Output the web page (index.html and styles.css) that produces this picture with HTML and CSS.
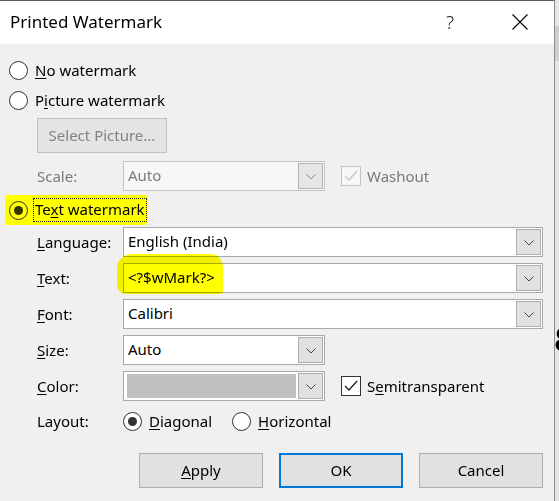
FILE: index.html
```html
<html>
<head>
	<meta charset="utf-8">
	<title>Printed Watermark</title>
	<link rel="stylesheet" href="styles.css">
</head>
<body>
	<div class="dialog">
		<div class="titlebar">
			<span class="title">Printed Watermark</span>
			<span class="tb-btn help">?</span>
			<span class="tb-btn close">
				<svg width="16" height="16" viewBox="0 0 16 16"><path d="M0.5 0.5 L15.5 15.5 M15.5 0.5 L0.5 15.5" stroke="#000" stroke-width="1.1" fill="none"/></svg>
			</span>
		</div>

		<div class="content">
			<div class="opt first"><span class="radio"></span><span><u>N</u>o watermark</span></div>
			<div class="opt"><span class="radio"></span><span>P<u>i</u>cture watermark</span></div>

			<div class="indent">
				<button class="btn select" disabled>Select Picture...</button>
				<div class="row scale">
					<span class="lbl off">Scale:</span>
					<div class="combo short off">
						<span class="val">Auto</span>
						<span class="drop"><svg width="10" height="6" viewBox="0 0 10 6"><polyline points="0.5,0.5 5,5 9.5,0.5" fill="none" stroke="#888" stroke-width="1"/></svg></span>
					</div>
					<span class="check off"><svg width="18" height="18" viewBox="0 0 18 18"><polyline points="3,9 7,13 15,4" fill="none" stroke="#c8c8c8" stroke-width="1.3"/></svg></span>
					<span class="off">Washout</span>
				</div>
			</div>

			<div class="hl">
				<span class="radio on"></span>
				<span class="focus">Te<u>x</u>t watermark</span>
			</div>

			<div class="indent fields">
				<div class="row">
					<span class="lbl"><u>L</u>anguage:</span>
					<div class="combo wide">
						<span class="val">English (India)</span>
						<span class="drop"><svg width="10" height="6" viewBox="0 0 10 6"><polyline points="0.5,0.5 5,5 9.5,0.5" fill="none" stroke="#444" stroke-width="1"/></svg></span>
					</div>
				</div>
				<div class="row">
					<span class="lbl"><u>T</u>ext:</span>
					<div class="combo wide">
						<span class="marker"></span>
						<span class="val">&lt;?$wMark?&gt;</span>
						<span class="drop"><svg width="10" height="6" viewBox="0 0 10 6"><polyline points="0.5,0.5 5,5 9.5,0.5" fill="none" stroke="#444" stroke-width="1"/></svg></span>
					</div>
				</div>
				<div class="row">
					<span class="lbl"><u>F</u>ont:</span>
					<div class="combo wide">
						<span class="val">Calibri</span>
						<span class="drop"><svg width="10" height="6" viewBox="0 0 10 6"><polyline points="0.5,0.5 5,5 9.5,0.5" fill="none" stroke="#444" stroke-width="1"/></svg></span>
					</div>
				</div>
				<div class="row">
					<span class="lbl"><u>S</u>ize:</span>
					<div class="combo short">
						<span class="val">Auto</span>
						<span class="drop"><svg width="10" height="6" viewBox="0 0 10 6"><polyline points="0.5,0.5 5,5 9.5,0.5" fill="none" stroke="#444" stroke-width="1"/></svg></span>
					</div>
				</div>
				<div class="row">
					<span class="lbl"><u>C</u>olor:</span>
					<div class="combo short color">
						<span class="swatch"></span>
						<span class="drop"><svg width="10" height="6" viewBox="0 0 10 6"><polyline points="0.5,0.5 5,5 9.5,0.5" fill="none" stroke="#444" stroke-width="1"/></svg></span>
					</div>
					<span class="check"><svg width="18" height="18" viewBox="0 0 18 18"><polyline points="3,9 7,13 15,4" fill="none" stroke="#222" stroke-width="1.3"/></svg></span>
					<span>S<u>e</u>mitransparent</span>
				</div>
				<div class="row layout">
					<span class="lbl">Layout:</span>
					<span class="opt inline"><span class="radio on"></span><span><u>D</u>iagonal</span></span>
					<span class="opt inline"><span class="radio"></span><span><u>H</u>orizontal</span></span>
				</div>
			</div>

			<div class="buttons">
				<button class="btn"><u>A</u>pply</button>
				<button class="btn default">OK</button>
				<button class="btn">Cancel</button>
			</div>
		</div>
	</div>

	<div class="desk">
		<div class="band"></div>
		<div class="glyph">ε</div>
	</div>
</body>
</html>
```

FILE: styles.css
```css
* {
	box-sizing: border-box;
}
body {
	margin: 0;
	height: 501px;
	overflow: hidden;
	display: flex;
	background: #e6e6e6;
	font-family: "Noto Sans", sans-serif;
	font-size: 15px;
	color: #000;
}
u {
	text-decoration-thickness: 1px;
	text-underline-offset: 2px;
}

/* window */
.dialog {
	width: 555px;
	height: 501px;
	flex: none;
	background: #f0f0f0;
	border-top: 1px solid #5c5c5c;
	border-right: 1px solid #8c8c8c;
}
.titlebar {
	height: 43px;
	background: #fff;
	display: flex;
	align-items: center;
	padding-left: 10px;
}
.title {
	flex: 1;
	font-size: 17px;
	padding-bottom: 2px;
}
.tb-btn {
	width: 46px;
	height: 43px;
	display: flex;
	align-items: center;
	justify-content: center;
}
.help {
	margin-right: 24px;
	font-size: 19px;
	font-weight: 300;
	color: #222;
	padding-bottom: 2px;
}
.close {
	margin-right: 11px;
	padding-bottom: 1px;
}

.content {
	padding: 16px 11px 0 9px;
}

/* radios */
.opt {
	display: flex;
	align-items: center;
	height: 20px;
	gap: 7px;
}
.opt + .opt {
	margin-top: 10px;
}
.opt.inline {
	display: inline-flex;
	margin: 0 20px 0 0;
}
.radio {
	width: 19px;
	height: 19px;
	flex: none;
	border: 1px solid #333;
	border-radius: 50%;
	background: #fff;
	display: flex;
	align-items: center;
	justify-content: center;
}
.radio.on::after {
	content: "";
	width: 9px;
	height: 9px;
	border-radius: 50%;
	background: #333;
}

.indent {
	margin-left: 28px;
}

/* buttons */
.btn {
	width: 124px;
	height: 35px;
	font-family: "Noto Sans", sans-serif;
	font-size: 15px;
	color: #000;
	background: #e1e1e1;
	border: 1px solid #adadad;
	padding: 0 0 2px;
}
.btn.default {
	border: 2px solid #0078d7;
}
.btn.select {
	display: block;
	width: 130px;
	margin-top: 8px;
	color: #838383;
	background: #e4e4e4;
	border-color: #c0c0c0;
}

/* form rows */
.row {
	display: flex;
	align-items: center;
	height: 30px;
}
.scale {
	margin-top: 8px;
}
.lbl {
	width: 86px;
	flex: none;
}
.off {
	color: #7a7a7a;
}
.combo {
	position: relative;
	display: flex;
	align-items: center;
	height: 30px;
	padding-left: 4px;
	background: #fff;
	border: 1px solid #a9a9a9;
	flex: none;
}
.combo.wide {
	width: 420px;
}
.combo.short {
	width: 202px;
}
.combo.off {
	background: #f7f7f7;
	border-color: #c4c4c4;
}
.val {
	padding-bottom: 2px;
}
.drop {
	margin-left: auto;
	margin-right: 1px;
	width: 25px;
	height: 26px;
	flex: none;
	background: #e1e1e1;
	border: 1px solid #adadad;
	display: flex;
	align-items: center;
	justify-content: center;
	padding-top: 1px;
}
.combo.off .drop {
	background: #e6e6e6;
	border-color: #b4b4b4;
}
.combo.color {
	padding-left: 3px;
}
.swatch {
	width: 169px;
	height: 24px;
	background: #c0c0c0;
	margin-right: 2px;
}

.check {
	width: 20px;
	height: 20px;
	flex: none;
	margin: 0 6px 0 16px;
	border: 1px solid #333;
	background: #fff;
	display: flex;
	align-items: center;
	justify-content: center;
}
.check.off {
	border-color: #c4c4c4;
	background: #f7f7f7;
}

/* yellow highlighter marks */
.hl {
	display: flex;
	align-items: center;
	gap: 5px;
	width: 142px;
	height: 30px;
	margin: 4px 0 0 -4px;
	padding-left: 4px;
	background: #ffff00;
	border-radius: 2px;
}
.hl .radio {
	background: transparent;
}
.hl .radio.on::after {
	background: #333300;
}
.focus {
	height: 24px;
	line-height: 20px;
	padding: 0 1px;
	border: 1px dotted #222;
}
.marker {
	position: absolute;
	left: -7px;
	top: -10px;
	width: 106px;
	height: 40px;
	background: #ffff00;
	mix-blend-mode: multiply;
	border-radius: 16px 12px 4px 8px / 14px 14px 3px 10px;
}

.fields {
	margin-top: 2px;
	display: flex;
	flex-direction: column;
	gap: 6px;
}
.fields .row.layout {
	height: 20px;
	margin-top: 4px;
}

.buttons {
	display: flex;
	justify-content: flex-end;
	gap: 16px;
	margin-top: 22px;
}

/* what shows behind the window */
.desk {
	flex: 1;
	overflow: hidden;
}
.band {
	height: 35px;
	margin-top: 26px;
	background: #cfcfcf;
}
.glyph {
	margin-top: 252px;
	font-size: 44px;
	font-weight: bold;
	line-height: 44px;
	margin-left: -1px;
}
```
